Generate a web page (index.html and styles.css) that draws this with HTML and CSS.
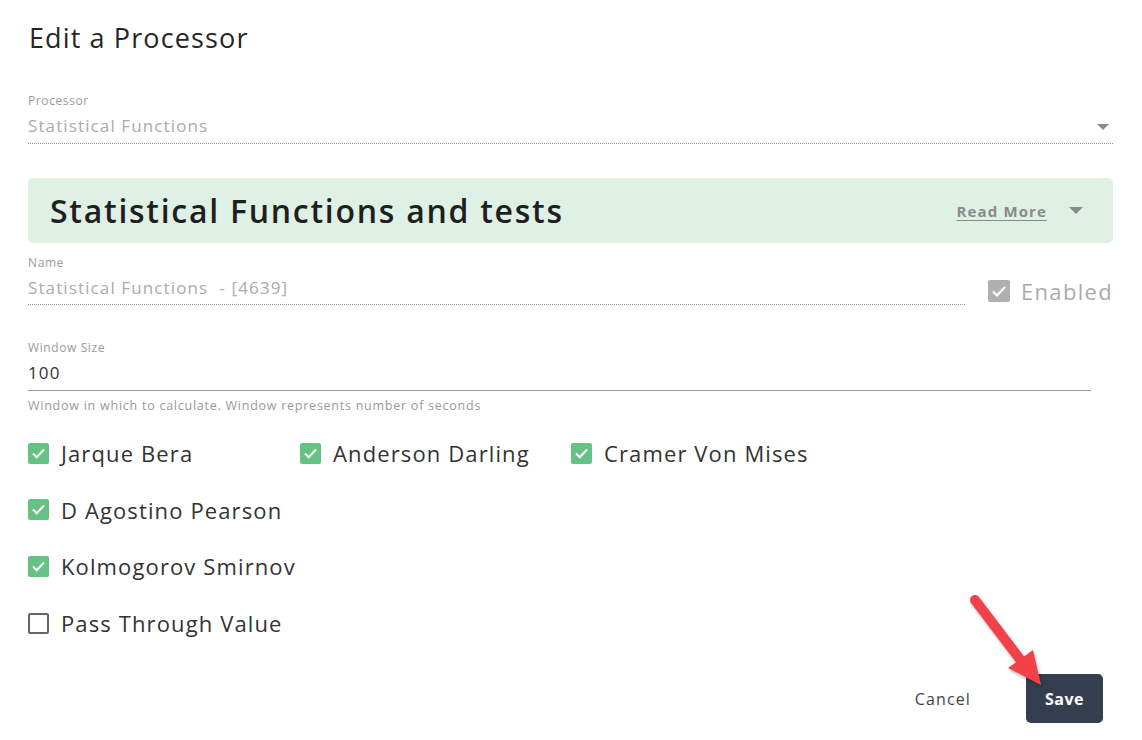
FILE: index.html
```html
<!DOCTYPE html>
<html>
<head>
<meta charset="utf-8">
<link rel="stylesheet" href="styles.css">
</head>
<body>
<div class="dialog">
  <h1 class="title">Edit a Processor</h1>

  <div class="field select-field">
    <div class="label">Processor</div>
    <div class="value disabled">Statistical Functions</div>
    <span class="caret"></span>
  </div>

  <div class="banner">
    <div class="banner-title">Statistical Functions and tests</div>
    <div class="banner-more"><span class="read-more">Read More</span><span class="caret caret-lg"></span></div>
  </div>

  <div class="name-row">
    <div class="field name-field">
      <div class="label">Name</div>
      <div class="value disabled">Statistical Functions&nbsp; - [4639]</div>
    </div>
    <div class="enabled">
      <span class="box box-gray"><svg viewBox="0 0 22 22"><path d="M5 11.5l4 4 8-8.5" fill="none" stroke="#fff" stroke-width="2"/></svg></span>
      <span class="enabled-text">Enabled</span>
    </div>
  </div>

  <div class="field input-field">
    <div class="label">Window Size</div>
    <div class="value">100</div>
  </div>
  <div class="helper">Window in which to calculate. Window represents number of seconds</div>

  <div class="checks">
    <label class="check"><span class="box box-green"><svg viewBox="0 0 21 21"><path d="M5 10.5l3.7 3.8 7.3-7.8" fill="none" stroke="#fff" stroke-width="2"/></svg></span>Jarque Bera</label>
    <label class="check"><span class="box box-green"><svg viewBox="0 0 21 21"><path d="M5 10.5l3.7 3.8 7.3-7.8" fill="none" stroke="#fff" stroke-width="2"/></svg></span>Anderson Darling</label>
    <label class="check"><span class="box box-green"><svg viewBox="0 0 21 21"><path d="M5 10.5l3.7 3.8 7.3-7.8" fill="none" stroke="#fff" stroke-width="2"/></svg></span>Cramer Von Mises</label>
    <label class="check full"><span class="box box-green"><svg viewBox="0 0 21 21"><path d="M5 10.5l3.7 3.8 7.3-7.8" fill="none" stroke="#fff" stroke-width="2"/></svg></span>D Agostino Pearson</label>
    <label class="check full"><span class="box box-green"><svg viewBox="0 0 21 21"><path d="M5 10.5l3.7 3.8 7.3-7.8" fill="none" stroke="#fff" stroke-width="2"/></svg></span>Kolmogorov Smirnov</label>
    <label class="check full"><span class="box box-empty"></span>Pass Through Value</label>
  </div>

  <div class="footer">
    <button class="btn-cancel">Cancel</button>
    <button class="btn-save">Save</button>
  </div>
</div>

<svg class="arrow" width="120" height="120" viewBox="0 0 120 120">
  <defs>
    <filter id="sh" x="-20%" y="-20%" width="140%" height="140%">
      <feDropShadow dx="1" dy="2" stdDeviation="1.5" flood-color="#000" flood-opacity="0.3"/>
    </filter>
  </defs>
  <g filter="url(#sh)">
    <line x1="15" y1="10" x2="62" y2="72" stroke="#f2424a" stroke-width="10" stroke-linecap="round"/>
    <polygon points="48,78 73,60 81,95" fill="#f2424a"/>
  </g>
</svg>
</body>
</html>
```
FILE: styles.css
```css
html, body {
  margin: 0;
  padding: 0;
  background: #fff;
}
body {
  font-family: "Open Sans", "DejaVu Sans", sans-serif;
  color: #333;
  letter-spacing: 0.07em;
}
.dialog {
  width: 1085px;
  padding: 0 0 0 28px;
  position: relative;
}
.title {
  margin: 0;
  height: 76px;
  line-height: 76px;
  font-size: 27px;
  font-weight: 400;
  color: #262626;
  padding-left: 1px;
}
.field {
  position: relative;
}
.label {
  font-size: 12px;
  line-height: 16px;
  color: #9a9a9a;
  letter-spacing: 0.05em;
}
.value {
  font-size: 17px;
  line-height: 26px;
  margin-top: 4px;
  color: #333;
}
.value.disabled {
  color: #ababab;
}
.select-field {
  margin-top: 17px;
  padding-bottom: 4px;
  border-bottom: 1px dotted #9a9a9a;
}
.caret {
  display: inline-block;
  width: 0;
  height: 0;
  border-left: 6px solid transparent;
  border-right: 6px solid transparent;
  border-top: 6px solid #8a8a8a;
}
.select-field .caret {
  position: absolute;
  right: 4px;
  top: 31px;
}
.banner {
  margin-top: 34px;
  height: 65px;
  background: #dff0e5;
  border-radius: 5px;
  display: flex;
  align-items: center;
  justify-content: space-between;
  padding: 0 30px 0 22px;
}
.banner-title {
  font-size: 32px;
  font-weight: 600;
  color: #1f1f1f;
  letter-spacing: 0.054em;
}
.banner-more {
  display: flex;
  align-items: center;
  gap: 22px;
}
.read-more {
  font-size: 15px;
  font-weight: 700;
  color: #8a8a8a;
  text-decoration: underline;
  text-underline-offset: 3px;
}
.caret-lg {
  border-left-width: 7px;
  border-right-width: 7px;
  border-top-width: 7px;
}
.name-row {
  display: flex;
  align-items: flex-end;
  margin-top: 12px;
}
.name-field {
  width: 937px;
  padding-bottom: 3px;
  border-bottom: 1px dotted #9a9a9a;
}
.enabled {
  margin-left: auto;
  display: flex;
  align-items: center;
  gap: 11px;
  padding-bottom: 1px;
}
.enabled-text {
  font-size: 22px;
  color: #ababab;
  line-height: 26px;
  letter-spacing: 0.06em;
}
.box {
  display: inline-flex;
  flex: none;
  box-sizing: border-box;
  width: 21px;
  height: 21px;
  border-radius: 2px;
}
.box svg {
  width: 100%;
  height: 100%;
}
.box-gray {
  width: 22px;
  height: 22px;
  background: #b0b0b0;
}
.box-green {
  background: #65c284;
}
.box-empty {
  border: 2px solid #666;
}
.input-field {
  margin-top: 35px;
  width: 1063px;
  padding-bottom: 4px;
  border-bottom: 1px solid #999;
}
.helper {
  margin-top: 7px;
  font-size: 12.5px;
  line-height: 16px;
  color: #9a9a9a;
  letter-spacing: 0.06em;
}
.checks {
  margin-top: 25px;
  display: grid;
  grid-template-columns: 272px 271px 272px;
  row-gap: 28.7px;
}
.check {
  display: flex;
  align-items: center;
  gap: 12px;
  height: 28px;
  font-size: 22px;
  color: #333;
}
.check.full {
  grid-column: 1 / -1;
}
.footer {
  display: flex;
  justify-content: flex-end;
  align-items: center;
  gap: 55px;
  margin-top: 37px;
  padding-right: 10px;
}
.btn-cancel {
  background: none;
  border: none;
  font-family: inherit;
  letter-spacing: inherit;
  font-size: 16px;
  color: #444;
  padding: 0;
}
.btn-save {
  width: 77px;
  height: 49px;
  background: #343e4f;
  color: #fff;
  border: none;
  border-radius: 5px;
  font-family: inherit;
  letter-spacing: 0.03em;
  font-size: 16px;
  font-weight: 700;
}
.arrow {
  position: absolute;
  left: 960px;
  top: 590px;
  overflow: visible;
}
```
